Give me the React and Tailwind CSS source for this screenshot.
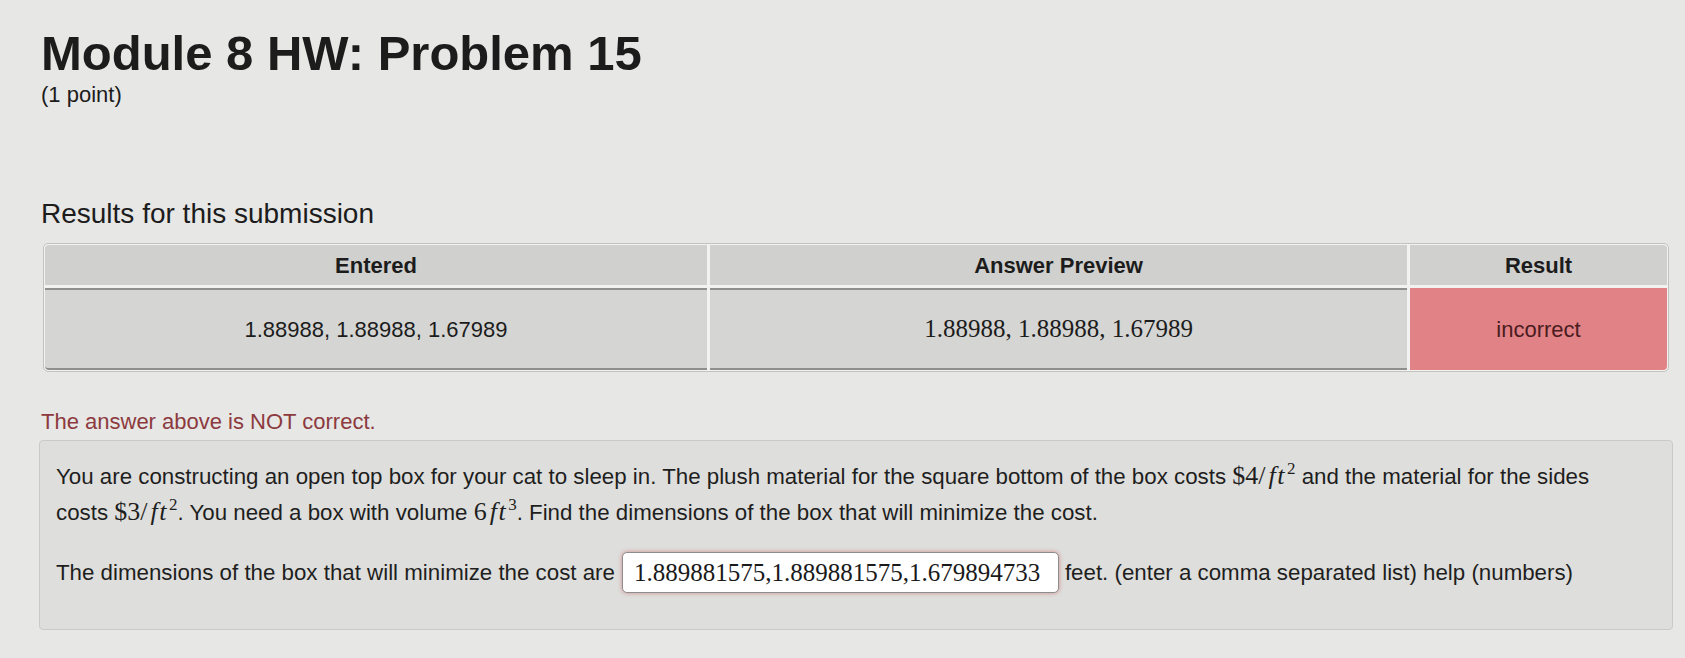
import React from 'react';

const serif = "font-['Liberation_Serif','Times_New_Roman',serif]";

function Unit({ value, power }) {
	return (
		<span className={`${serif} text-[26px]`}>
			{value}
			<i className="ml-[3px] mr-[1px] tracking-[1.5px]">ft</i>
			<span className="relative -top-[10px] text-[17px]">{power}</span>
		</span>
	);
}

export default function App() {
	return (
		<div className="min-h-[658px] bg-[#e7e7e5] pl-[41px] pr-[12px] pt-[25px] text-[#1c1c1c] font-['Liberation_Sans',Arial,sans-serif]">
			<h1 className="text-[49px] font-bold leading-[57px]">Module 8 HW: Problem 15</h1>
			<div className="text-[22px] leading-[26px]">(1 point)</div>

			<h2 className="mt-[89px] text-[28px] leading-[33px]">Results for this submission</h2>

			<div className="ml-[2px] mt-[13px] w-[1626px] rounded-[5px] border border-[#c2c2c0] bg-[#f2f2f0] p-[1px]">
				<div className="grid grid-cols-[662px_697px_1fr] gap-x-[3px] text-[22px] font-bold">
					<div className="flex h-[40px] items-center justify-center rounded-tl-[4px] bg-[#d0d0ce]">Entered</div>
					<div className="flex h-[40px] items-center justify-center bg-[#d0d0ce]">Answer Preview</div>
					<div className="flex h-[40px] items-center justify-center rounded-tr-[4px] bg-[#d0d0ce]">Result</div>
				</div>
				<div className="mt-[3px] grid grid-cols-[662px_697px_1fr] gap-x-[3px] text-[22px]">
					<div className="flex h-[82px] items-center justify-center rounded-bl-[4px] border-y-2 border-[#8f8f8d] bg-[#d5d5d3]">
						1.88988, 1.88988, 1.67989
					</div>
					<div className={`flex h-[82px] items-center justify-center border-y-2 border-[#8f8f8d] bg-[#d5d5d3] ${serif} text-[25px]`}>
						1.88988, 1.88988, 1.67989
					</div>
					<div className="flex h-[82px] items-center justify-center rounded-br-[4px] bg-[#e18287] text-[#4a1c1e]">
						incorrect
					</div>
				</div>
			</div>

			<div className="mt-[37px] text-[22px] leading-[26px] text-[#8c3a3e]">The answer above is NOT correct.</div>

			<div className="-ml-[2px] mt-[5px] h-[190px] w-[1634px] rounded-[4px] border border-[#cacac8] bg-[#dededc] px-[16px] pt-[18px] text-[22.3px] leading-[33px] text-[#1e1e1e]">
				<p>
					You are constructing an open top box for your cat to sleep in. The plush material for the square bottom of the box
					costs <Unit value="$4/" power="2" /> and the material for the sides
					<br />
					costs <Unit value="$3/" power="2" />. You need a box with volume <Unit value="6" power="3" />. Find the dimensions of
					the box that will minimize the cost.
				</p>
				<div className="mt-[21px] flex h-[41px] items-center whitespace-nowrap">
					<span>The dimensions of the box that will minimize the cost are</span>
					<div
						className={`ml-[7px] mr-[6px] flex h-[41px] w-[437px] items-center rounded-[5px] border border-[#8d8d8d] bg-white pl-[11px] shadow-[0_0_4px_rgba(200,70,70,0.55)] ${serif} text-[25px] text-[#1a1a1a]`}
					>
						1.889881575,1.889881575,1.679894733
					</div>
					<span>feet. (enter a comma separated list) help (numbers)</span>
				</div>
			</div>
		</div>
	);
}
